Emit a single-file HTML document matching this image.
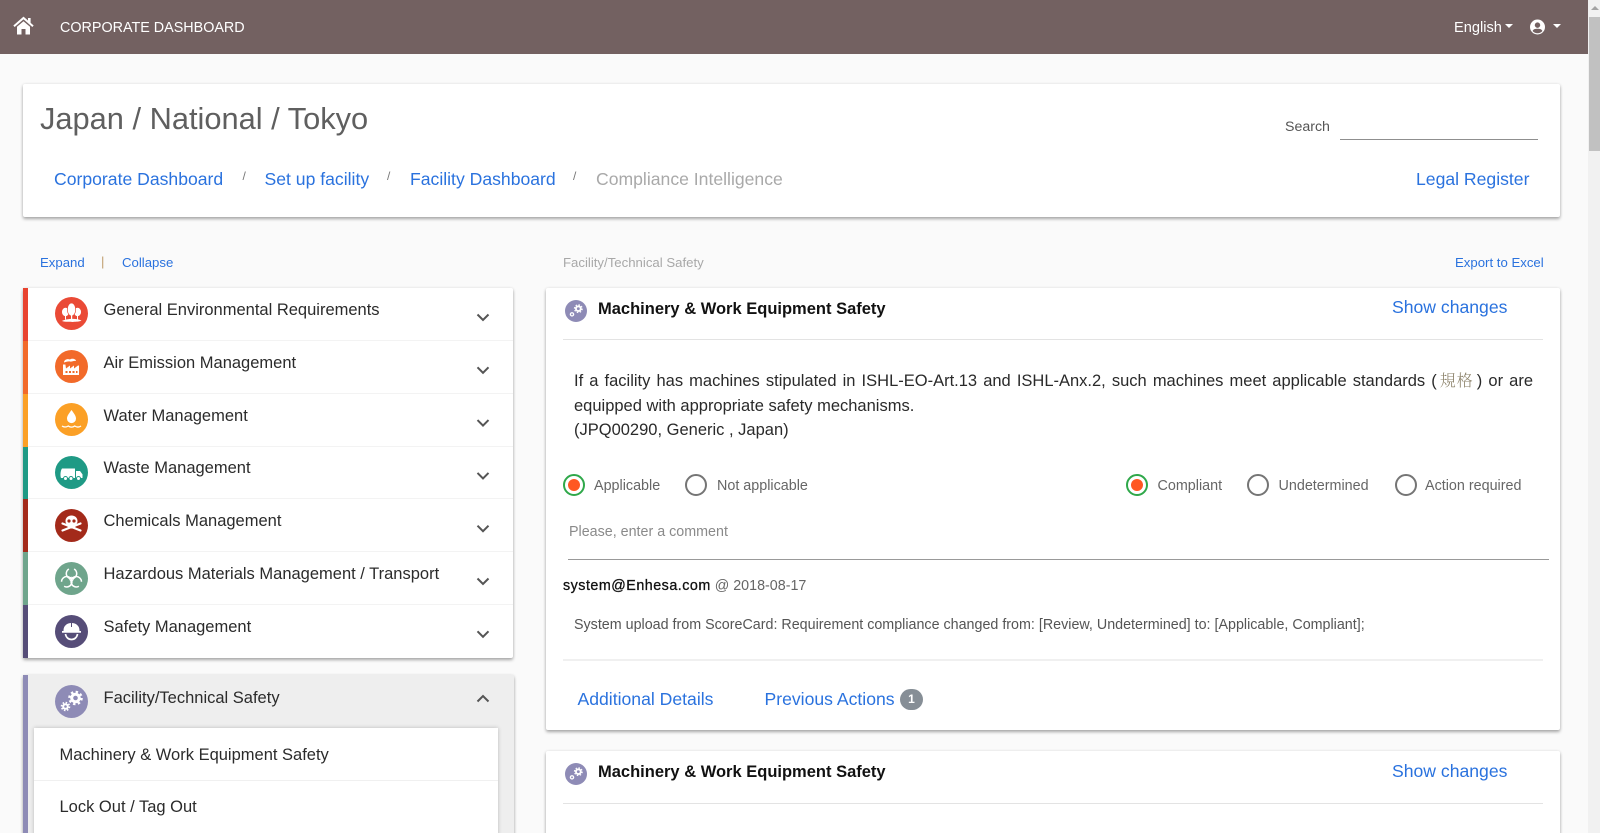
<!DOCTYPE html>
<html lang="en"><head><meta charset="utf-8"><title>Corporate Dashboard</title>
<style>
html,body{margin:0;padding:0;width:1600px;height:833px;overflow:hidden;background:#fafafa}
body{font-family:"Liberation Sans","Noto Sans CJK JP",sans-serif;color:#2b2b2b;position:relative}
.a,.t{position:absolute}
.t{white-space:nowrap;line-height:20px}
.l{color:#2a72de}
.c{background:#fff;border-radius:2px;box-shadow:0 2px 3px rgba(0,0,0,.32),0 0 3px rgba(0,0,0,.08)}
.f16{font-size:16.5px}.f18{font-size:17.6px}.f14{font-size:14.3px}.f13{font-size:13.2px}
.radio{position:absolute;width:18px;height:18px;border:2.4px solid #757575;border-radius:50%;top:474px}
.radio.on{border-color:#2fa84a}
.radio.on:after{content:"";position:absolute;left:3px;top:3px;width:12px;height:12px;border-radius:50%;background:#ff5722}
.bar{position:absolute;left:23px;width:5px}
.sep{position:absolute;left:28px;width:485px;height:1px;background:#f3f3f3}
svg{position:absolute;display:block}
.rl{font-size:14.35px;color:#666;top:476px}
</style></head><body>

<!-- navbar -->
<div class="a" style="left:0;top:0;width:1588px;height:54px;background:#736161"></div>
<svg style="left:13px;top:16px" width="21" height="19" viewBox="0 0 21 19"><path fill="#fff" d="M4 10.800 10.500 5.200 17 10.800V18.500H12.500V13H8.500V18.500H4z"/><path fill="none" stroke="#fff" stroke-width="2" d="M1 10.300 10.500 2 20 10.300"/><path fill="#fff" d="M15 2h2.600v5H15z"/></svg>
<div class="t" style="left:60px;top:18px;color:#fff;font-size:14.35px">CORPORATE DASHBOARD</div>
<div class="t" style="left:1454px;top:18px;color:#fff;font-size:14.6px">English</div>
<div class="a" style="left:1505px;top:24px;border:4px solid transparent;border-top-color:#fff;border-bottom:0"></div>
<svg style="left:1530px;top:19px" width="15" height="16" viewBox="0 0 16 16"><circle cx="8" cy="8" r="8" fill="#fff"/><circle cx="8" cy="6" r="2.900" fill="#736161"/><path fill="#736161" d="M2.800 12.200C3.600 10.200 5.400 9.800 8 9.800s4.400.4 5.200 2.400C12 13.700 10.200 14.600 8 14.600s-4-.9-5.200-2.400z"/></svg>
<div class="a" style="left:1553px;top:24px;border:4px solid transparent;border-top-color:#fff;border-bottom:0"></div>

<!-- scrollbar -->
<div class="a" style="left:1588px;top:0;width:12px;height:833px;background:#f1f1f1"></div>
<div class="a" style="left:1589px;top:17px;width:11px;height:134px;background:#c1c1c1"></div>
<div class="a" style="left:1591px;top:6px;border:4px solid transparent;border-bottom-color:#a3a3a3;border-top:0"></div>

<!-- header card -->
<div class="a c" style="left:23px;top:84px;width:1537px;height:133px"></div>
<div class="t" style="left:40px;top:104px;font-size:30.8px;line-height:30px;color:#5f5f5f">Japan / National / Tokyo</div>
<div class="t" style="left:1285px;top:117px;color:#555;font-size:14.2px">Search</div>
<div class="a" style="left:1340px;top:139px;width:198px;height:1px;background:#8f8f8f"></div>
<div class="t f18 l" style="left:54px;top:169px">Corporate Dashboard</div>
<div class="t" style="left:242.500px;top:166px;color:#777;font-size:12px">/</div>
<div class="t f18 l" style="left:264.500px;top:169px">Set up facility</div>
<div class="t" style="left:387px;top:166px;color:#777;font-size:12px">/</div>
<div class="t f18 l" style="left:410px;top:169px">Facility Dashboard</div>
<div class="t" style="left:573px;top:166px;color:#777;font-size:12px">/</div>
<div class="t f18" style="left:596px;top:169px;color:#a9a9a9">Compliance Intelligence</div>
<div class="t f18 l" style="left:1416px;top:169px">Legal Register</div>

<!-- toolbar row -->
<div class="t f13 l" style="left:40px;top:253px">Expand</div>
<div class="t f13" style="left:101px;top:252px;color:#c0a070">|</div>
<div class="t f13 l" style="left:122px;top:253px">Collapse</div>
<div class="t f13" style="left:563px;top:253px;color:#a8a8a8">Facility/Technical Safety</div>
<div class="t f13 l" style="left:1455px;top:253px">Export to Excel</div>

<!-- left list -->
<div class="a c" style="left:23px;top:288px;width:490px;height:370px"></div>
<div class="bar" style="top:288px;height:53px;background:#e8432f"></div>
<div class="bar" style="top:341px;height:52.800px;background:#f26a2a"></div>
<div class="bar" style="top:393.800px;height:52.800px;background:#fba026"></div>
<div class="bar" style="top:446.600px;height:52.800px;background:#1f9a85"></div>
<div class="bar" style="top:499.400px;height:52.800px;background:#a32a1a"></div>
<div class="bar" style="top:552.200px;height:52.800px;background:#6fa58c"></div>
<div class="bar" style="top:605px;height:53px;background:#564d78"></div>
<div class="sep" style="top:340px"></div><div class="sep" style="top:393px"></div><div class="sep" style="top:446px"></div><div class="sep" style="top:498px"></div><div class="sep" style="top:551px"></div><div class="sep" style="top:604px"></div>

<!-- icon 1 trees -->
<svg style="left:55px;top:297px" width="33" height="33" viewBox="0 0 33 33"><circle cx="16.500" cy="16.500" r="16.500" fill="#ea4a36"/><g fill="#fff" stroke="#ea4a36" stroke-width=".7"><ellipse cx="10.500" cy="15" rx="3.900" ry="4.600"/><ellipse cx="22.500" cy="15" rx="3.900" ry="4.600"/><ellipse cx="16.500" cy="12.500" rx="4.200" ry="6.500"/></g><g fill="#fff"><rect x="16" y="18" width="1.200" height="5"/><rect x="10" y="18" width="1" height="4.500"/><rect x="22" y="18" width="1" height="4.500"/><path d="M7 24c4-2.400 15-3 19.500-.3-3.500 1.300-6 .7-9 1.300-3.500-.6-7.500 .3-10.500-1z"/></g></svg>
<div class="t f16" style="left:103.500px;top:300px">General Environmental Requirements</div>
<!-- icon 2 factory -->
<svg style="left:55px;top:350px" width="33" height="33" viewBox="0 0 33 33"><circle cx="16.500" cy="16.500" r="16.500" fill="#f26a2a"/><path fill="#fff" d="M8 25V14.500h2.400l.6 4 4-3v3l4-3v3l4-3 1 0V25z"/><path fill="#fff" d="M9 12.500c0-2.500 3-4 6-3 2-1.500 6-.5 6 1.500-2.500-.6-4 1-6 .5-2-.3-4 .5-6 1z"/><g fill="#f26a2a"><rect x="10.500" y="21" width="2" height="2"/><rect x="14" y="21" width="2" height="2"/><rect x="17.500" y="21" width="2" height="2"/><rect x="21" y="21" width="1.500" height="2"/></g></svg>
<div class="t f16" style="left:103.500px;top:353px">Air Emission Management</div>
<!-- icon 3 water -->
<svg style="left:55px;top:403px" width="33" height="33" viewBox="0 0 33 33"><circle cx="16.500" cy="16.500" r="16.500" fill="#fba026"/><path fill="#fff" d="M16.500 7c2.600 3.600 4.500 6 4.500 8.600a4.500 4.500 0 0 1-9 0C12 13 13.900 10.600 16.500 7z"/><path fill="none" stroke="#fff" stroke-width="1.300" d="M7 23c2 1.400 4 1.400 6.300 0 2 1.400 4.400 1.400 6.400 0 2.200 1.400 4.300 1.400 6.300 0"/></svg>
<div class="t f16" style="left:103.500px;top:406px">Water Management</div>
<!-- icon 4 truck -->
<svg style="left:55px;top:456px" width="33" height="33" viewBox="0 0 33 33"><circle cx="16.500" cy="16.500" r="16.500" fill="#1f9a85"/><path fill="#fff" d="M7 12.500h13v9.500H6c-.8-2-.8-7 1-9.500zM21 15h4l2.500 3.400V22H21z"/><g fill="#fff" stroke="#1f9a85"><circle cx="10.500" cy="22.500" r="2"/><circle cx="16" cy="22.500" r="2"/><circle cx="23.500" cy="22.500" r="2"/></g></svg>
<div class="t f16" style="left:103.500px;top:458px">Waste Management</div>
<!-- icon 5 skull -->
<svg style="left:55px;top:509px" width="33" height="33" viewBox="0 0 33 33"><circle cx="16.500" cy="16.500" r="16.500" fill="#a32a1a"/><path stroke="#fff" stroke-width="2.200" stroke-linecap="round" d="M7.500 14.500l18 7M25.500 14.500l-18 7"/><path fill="#fff" d="M16.500 6.500c3.800 0 6 2.500 6 5.500 0 2.200-1.100 3.500-2.200 4.100V19.500h-7.600v-3.400c-1.100-.6-2.200-1.900-2.200-4.100 0-3 2.200-5.500 6-5.500z"/><circle cx="14" cy="12" r="1.600" fill="#a32a1a"/><circle cx="19" cy="12" r="1.600" fill="#a32a1a"/></svg>
<div class="t f16" style="left:103.500px;top:511px">Chemicals Management</div>
<!-- icon 6 biohazard -->
<svg style="left:55px;top:562px" width="33" height="33" viewBox="0 0 33 33"><circle cx="16.500" cy="16.500" r="16.500" fill="#6fa58c"/><g fill="none" stroke="#fff" stroke-width="1.500"><path id="h" d="M19.100 7A5.200 5.200 0 1 1 13.900 7"/><path transform="rotate(120 16.500 17)" d="M19.100 7A5.200 5.200 0 1 1 13.900 7"/><path transform="rotate(240 16.500 17)" d="M19.100 7A5.200 5.200 0 1 1 13.900 7"/><circle cx="16.500" cy="17" r="1.800" stroke-width="1"/></g></svg>
<div class="t f16" style="left:103.500px;top:564px">Hazardous Materials Management / Transport</div>
<!-- icon 7 helmet -->
<svg style="left:55px;top:615px" width="33" height="33" viewBox="0 0 33 33"><circle cx="16.500" cy="16.500" r="16.500" fill="#564d78"/><path fill="#fff" d="M8.500 15.500c0-4.500 3.300-7.500 8-7.500s8 3 8 7.500V16H26v1.800H7V16h1.500z"/><path fill="#564d78" d="M16 8h1v4h-1z"/><path fill="none" stroke="#fff" stroke-width="1.700" d="M10.500 19c.5 3.500 3 5.500 6 5.500s5.500-2 6-5.500"/></svg>
<div class="t f16" style="left:103.500px;top:617px">Safety Management</div>

<!-- chevrons -->
<svg style="left:476px;top:313px" width="14" height="334" viewBox="0 0 14 334"><g fill="none" stroke="#555" stroke-width="2"><path d="M1.500 1.500 7 7l5.500-5.500"/><path d="M1.500 54.300 7 59.800l5.500-5.500"/><path d="M1.500 107.100 7 112.600l5.500-5.500"/><path d="M1.500 159.900 7 165.400l5.500-5.500"/><path d="M1.500 212.700 7 218.200l5.500-5.500"/><path d="M1.500 265.500 7 271l5.500-5.500"/><path d="M1.500 318.300 7 323.800l5.500-5.500"/></g></svg>

<!-- expanded group -->
<div class="a c" style="left:23px;top:675px;width:491px;height:170px;background:#eee"></div>
<div class="bar" style="top:675px;height:158px;background:#8e8bb6"></div>
<svg style="left:55px;top:685px" width="33" height="33" viewBox="0 0 33 33"><circle cx="16.500" cy="16.500" r="16.500" fill="#8e8bb6"/><g fill="none" stroke="#fff"><circle cx="20.500" cy="13" r="3.800" stroke-width="3"/><circle cx="20.500" cy="13" r="6.200" stroke-width="2.200" stroke-dasharray="2.430 2.430"/><circle cx="10.500" cy="21.500" r="2.300" stroke-width="2"/><circle cx="10.500" cy="21.500" r="4" stroke-width="1.600" stroke-dasharray="1.570 1.570"/></g></svg>
<div class="t f16" style="left:103.500px;top:688px">Facility/Technical Safety</div>
<svg style="left:476px;top:694px" width="14" height="9" viewBox="0 0 14 9"><path fill="none" stroke="#555" stroke-width="2" d="M1.500 7.500 7 2l5.500 5.500"/></svg>
<div class="a" style="left:33.500px;top:728px;width:464px;height:110px;background:#fff;box-shadow:0 0 4px rgba(0,0,0,.22)"></div>
<div class="a" style="left:33.500px;top:780px;width:464px;height:1px;background:#f0f0f0"></div>
<div class="t f16" style="left:59.500px;top:745px">Machinery &amp; Work Equipment Safety</div>
<div class="t f16" style="left:59.500px;top:796.500px">Lock Out / Tag Out</div>

<!-- main card 1 -->
<div class="a c" style="left:546px;top:288px;width:1014px;height:442px"></div>
<svg style="left:565px;top:300px" width="22" height="22" viewBox="0 0 33 33"><circle cx="16.500" cy="16.500" r="16.500" fill="#8e8bb6"/><g fill="none" stroke="#fff"><circle cx="20" cy="13" r="3.600" stroke-width="2.800"/><circle cx="20" cy="13" r="5.800" stroke-width="1.800" stroke-dasharray="2.280 2.280"/><circle cx="10.500" cy="21.500" r="2.400" stroke-width="2"/></g></svg>
<div class="t f16" style="left:598px;top:299px;font-weight:bold;color:#111">Machinery &amp; Work Equipment Safety</div>
<div class="t f18 l" style="left:1392px;top:297px">Show changes</div>
<div class="a" style="left:563px;top:339px;width:980px;height:1px;background:#e3e3e3"></div>

<div class="a f16" style="left:574px;top:368px;width:959px;line-height:24.600px;text-align:justify;color:#2a2a2a">If a facility has machines stipulated in ISHL-EO-Art.13 and ISHL-Anx.2, such machines meet applicable standards (<span style="display:inline-block;color:#8a8068;font-family:'Noto Serif CJK JP','Noto Serif CJK SC',serif;font-size:16px;letter-spacing:1px;font-weight:300;margin:0 3px">規格</span>) or are equipped with appropriate safety mechanisms.<br>(JPQ00290, Generic , Japan)</div>

<div class="radio on" style="left:563px"></div><div class="t rl" style="left:594px">Applicable</div>
<div class="radio" style="left:685px"></div><div class="t rl" style="left:717px">Not applicable</div>
<div class="radio on" style="left:1126px"></div><div class="t rl" style="left:1157.500px">Compliant</div>
<div class="radio" style="left:1247px"></div><div class="t rl" style="left:1278.500px">Undetermined</div>
<div class="radio" style="left:1395px"></div><div class="t rl" style="left:1425px">Action required</div>

<div class="t f14" style="left:569px;top:522px;color:#8a8a8a">Please, enter a comment</div>
<div class="a" style="left:568px;top:559px;width:981px;height:1px;background:#999"></div>
<div class="t" style="left:563px;top:576px;color:#666;font-size:14.300px"><span style="color:#111;-webkit-text-stroke:.3px #111;letter-spacing:.5px">system@Enhesa.com</span> @ 2018-08-17</div>
<div class="t f14" style="left:574px;top:615px;color:#555">System upload from ScoreCard: Requirement compliance changed from: [Review, Undetermined] to: [Applicable, Compliant];</div>
<div class="a" style="left:563px;top:659px;width:980px;height:2px;background:#f0f0f0"></div>
<div class="t f18 l" style="left:577.500px;top:689px">Additional Details</div>
<div class="t f18 l" style="left:764.500px;top:689px">Previous Actions</div>
<div class="a" style="left:900px;top:689px;width:23px;height:21px;border-radius:11px;background:#868e96;color:#fff;font-size:12px;font-weight:bold;line-height:21px;text-align:center">1</div>

<!-- main card 2 -->
<div class="a c" style="left:546px;top:751px;width:1014px;height:120px"></div>
<svg style="left:565px;top:763px" width="22" height="22" viewBox="0 0 33 33"><circle cx="16.500" cy="16.500" r="16.500" fill="#8e8bb6"/><g fill="none" stroke="#fff"><circle cx="20" cy="13" r="3.600" stroke-width="2.800"/><circle cx="20" cy="13" r="5.800" stroke-width="1.800" stroke-dasharray="2.280 2.280"/><circle cx="10.500" cy="21.500" r="2.400" stroke-width="2"/></g></svg>
<div class="t f16" style="left:598px;top:762px;font-weight:bold;color:#111">Machinery &amp; Work Equipment Safety</div>
<div class="t f18 l" style="left:1392px;top:761px">Show changes</div>
<div class="a" style="left:563px;top:803px;width:980px;height:1px;background:#e3e3e3"></div>
</body></html>
